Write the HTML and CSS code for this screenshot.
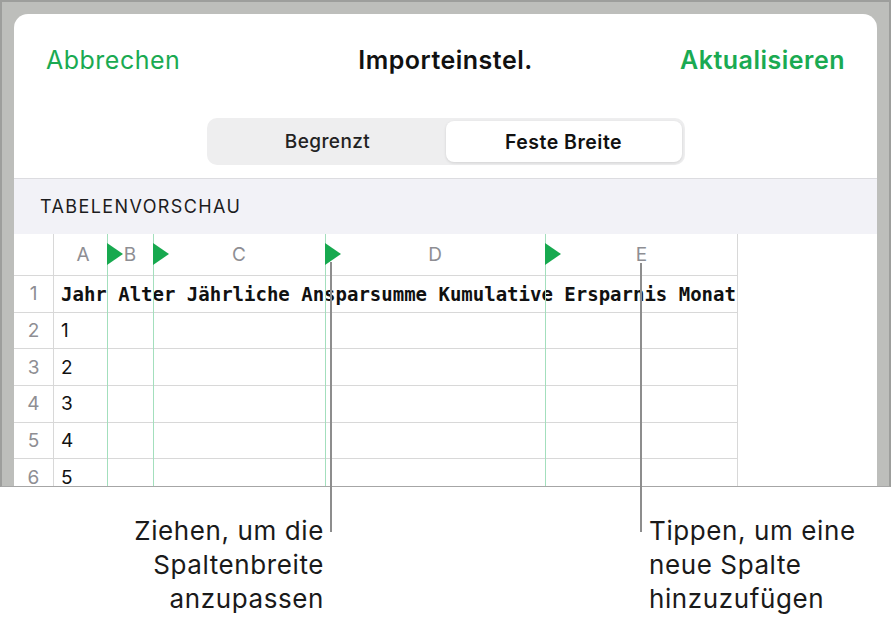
FILE: index.html
```html
<!DOCTYPE html>
<html lang="de">
<head>
    <meta charset="UTF-8">
    <meta name="viewport" content="width=device-width, initial-scale=1.0">
    <title>Importeinstellungen</title>
    <link rel="stylesheet" href="styles.css">
</head>
<body>
    <div class="page">
        <div class="screen">
            <div class="sheet">
                <div class="nav">
                    <span class="nav-cancel">Abbrechen</span>
                    <span class="nav-title">Importeinstel.</span>
                    <span class="nav-done">Aktualisieren</span>
                </div>

                <div class="segmented">
                    <div class="segment">Begrenzt</div>
                    <div class="segment selected">Feste Breite</div>
                </div>

                <div class="section-title">TABELENVORSCHAU</div>

                <div class="preview">
                    <div class="row head">
                        <div class="num"></div>
                        <div class="cells letters">
                            <span class="col-a">A</span>
                            <span>B</span>
                            <span>C</span>
                            <span>D</span>
                            <span>E</span>
                        </div>
                    </div>
                    <div class="row">
                        <div class="num">1</div>
                        <div class="cells mono">Jahr Alter Jährliche Ansparsumme Kumulative Ersparnis Monat</div>
                    </div>
                    <div class="row">
                        <div class="num">2</div>
                        <div class="cells">1</div>
                    </div>
                    <div class="row">
                        <div class="num">3</div>
                        <div class="cells">2</div>
                    </div>
                    <div class="row">
                        <div class="num">4</div>
                        <div class="cells">3</div>
                    </div>
                    <div class="row">
                        <div class="num">5</div>
                        <div class="cells">4</div>
                    </div>
                    <div class="row">
                        <div class="num">6</div>
                        <div class="cells">5</div>
                    </div>

                    <!-- column breaks, each with its drag handle -->
                    <div class="divider d1"><span class="handle"></span></div>
                    <div class="divider d2"><span class="handle"></span></div>
                    <div class="divider d3"><span class="handle"></span></div>
                    <div class="divider d4"><span class="handle"></span></div>
                </div>
            </div>
        </div>

        <div class="notes">
            <p class="note note-left">Ziehen, um die<br>Spaltenbreite<br>anzupassen</p>
            <p class="note note-right">Tippen, um eine<br>neue Spalte<br>hinzuzufügen</p>
        </div>

        <div class="leader leader-drag"></div>
        <div class="leader leader-tap"></div>
    </div>
</body>
</html>
```

FILE: styles.css
```css
body {
    margin: 0;
    background: #fff;
    font-family: Inter, "Noto Sans", sans-serif;
    color: #111;
}

.page {
    position: relative;
    width: 891px;
    height: 622px;
}

/* grey device frame around the sheet */
.screen {
    box-sizing: border-box;
    height: 487px;
    padding: 12px 12px 0;
    background: #bdbebb;
    border: 2px solid #9d9e9c;
    border-bottom: 1px solid #a6a6a6;
}

.sheet {
    height: 100%;
    background: #fff;
    border-radius: 14px 14px 0 0;
    overflow: hidden;
    display: flex;
    flex-direction: column;
}

.sheet > * {
    flex-shrink: 0;
}

.nav {
    display: grid;
    grid-template-columns: 1fr auto 1fr;
    align-items: center;
    padding: 32px 32px 0;
    line-height: 28px;
    font-size: 25px;
    letter-spacing: 0.5px;
}

.nav-cancel {
    color: #1aaa52;
}

.nav-title {
    font-weight: 600;
    color: #111;
}

.nav-done {
    justify-self: end;
    color: #1aaa52;
    font-weight: 600;
}

.segmented {
    box-sizing: border-box;
    display: flex;
    width: 478px;
    height: 47px;
    margin: 44px auto 13px;
    padding: 3px;
    background: #eeeeef;
    border-radius: 10px;
}

.segment {
    flex: 1;
    display: flex;
    align-items: center;
    justify-content: center;
    font-size: 19px;
    font-weight: 500;
    letter-spacing: 0.4px;
    color: #222;
    border-radius: 8px;
}

.segment.selected {
    background: #fff;
    font-size: 19.5px;
    font-weight: 600;
    letter-spacing: 0.5px;
    color: #111;
    box-shadow: 0 1px 3px rgba(0, 0, 0, 0.12);
}

.section-title {
    box-sizing: border-box;
    height: 56px;
    display: flex;
    align-items: center;
    padding-left: 26px;
    background: #f2f2f7;
    border-top: 1px solid #dcdce0;
    font-size: 18px;
    letter-spacing: 1.4px;
    color: #1c1c1e;
}

.preview {
    position: relative;
    flex: 1;
}

.row {
    display: flex;
    box-sizing: border-box;
    height: 36.7px;
    border-bottom: 1px solid #d8d8d8;
    width: 724px;
}

.row.head {
    height: 42px;
}

.num {
    box-sizing: border-box;
    width: 40px;
    border-right: 1px solid #d8d8d8;
    display: flex;
    align-items: center;
    justify-content: center;
    font-size: 19px;
    color: #8e8e93;
}

.cells {
    box-sizing: border-box;
    width: 684px;
    border-right: 1px solid #d8d8d8;
    display: flex;
    align-items: center;
    padding-left: 7px;
    white-space: nowrap;
    overflow: hidden;
    font-size: 19px;
}

.cells.mono {
    font-family: "DejaVu Sans Mono", monospace;
    font-weight: bold;
    font-size: 19px;
    color: #111;
}

.letters {
    display: grid;
    grid-template-columns: 53px 46px 172px 220px 193px;
    padding-left: 0;
    font-size: 19px;
    color: #8e8e93;
}

.letters span {
    text-align: center;
}

.letters .col-a {
    padding-left: 5px;
}

.divider {
    position: absolute;
    top: 0;
    bottom: 0;
    width: 1px;
    background: #a3dfbd;
}

.d1 { left: 93px; }
.d2 { left: 139px; }
.d3 { left: 311px; }
.d4 { left: 531px; }

.handle {
    position: absolute;
    top: 9px;
    left: 0;
    width: 0;
    height: 0;
    border-left: 16px solid #17a94f;
    border-top: 11.5px solid transparent;
    border-bottom: 11.5px solid transparent;
}

.notes {
    display: flex;
    padding-top: 27px;
}

.note {
    margin: 0;
    font-size: 26px;
    line-height: 34px;
    letter-spacing: 0.6px;
    color: #1a1a1a;
}

.note-left {
    width: 324px;
    text-align: right;
}

.note-right {
    margin-left: 325px;
}

/* leader lines from the captions up into the preview */
.leader {
    position: absolute;
    width: 2px;
    background: #8d8d8d;
}

.leader-drag {
    left: 330px;
    top: 262px;
    height: 270px;
}

.leader-tap {
    left: 640px;
    top: 263px;
    height: 269px;
}
```
